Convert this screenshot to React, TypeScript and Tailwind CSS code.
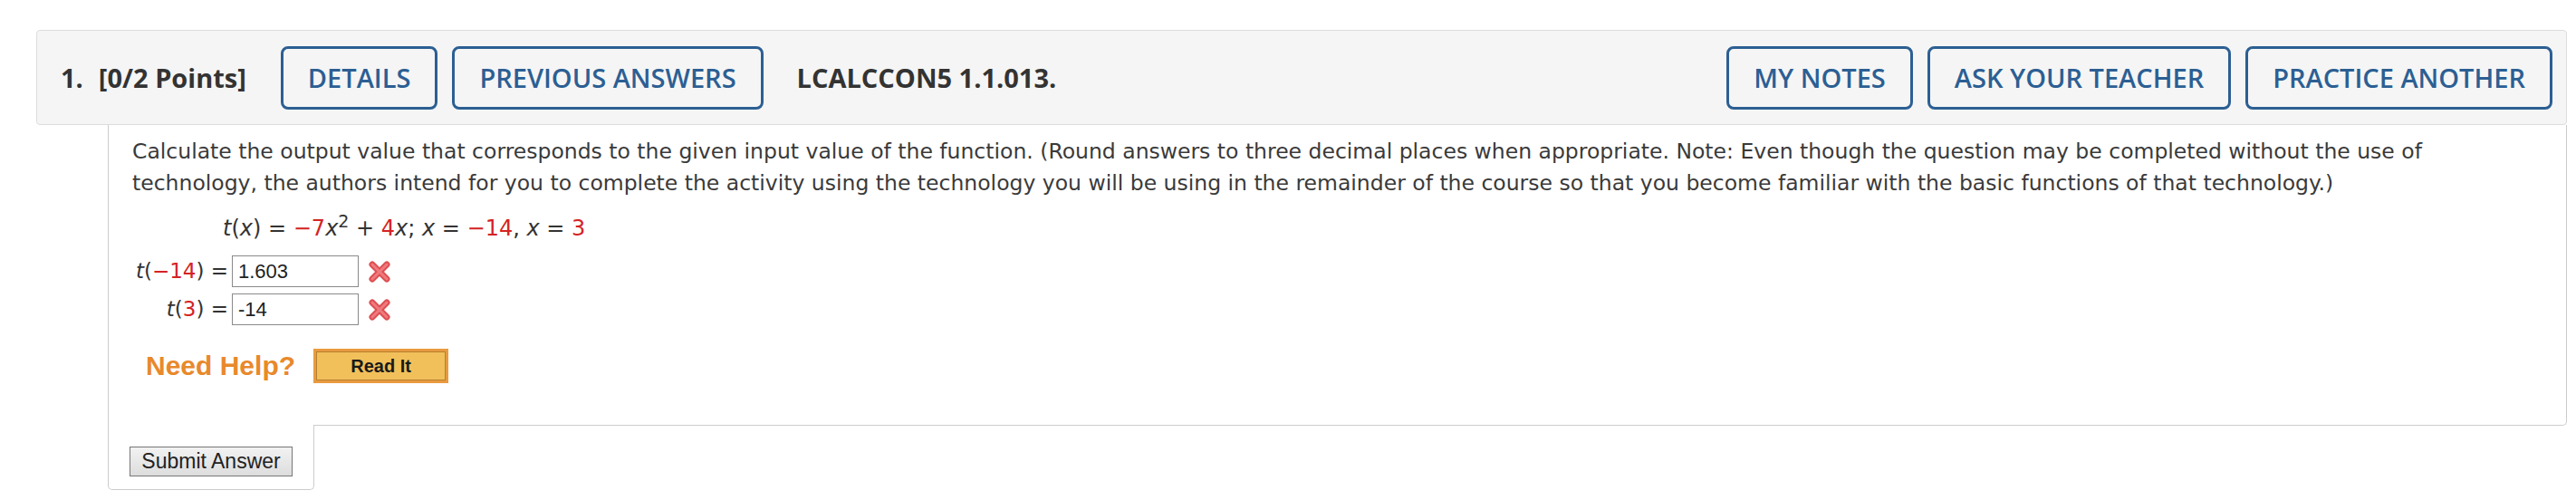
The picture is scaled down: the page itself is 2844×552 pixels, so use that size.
const headerBtn =
  "h-[70px] px-[27px] border-[3px] border-[#2c5f93] rounded-[8px] text-[#2c5f93] text-[29px] font-semibold flex items-center bg-[#f5f5f5]";

const red = "text-[#d42323]";

const XMark = () => (
  <svg width="28" height="26" viewBox="0 0 28 26" className="ml-[9px]">
    <path d="M6 5 L22 21 M22 5 L6 21" stroke="#dd4f53" strokeWidth="7" strokeLinecap="round" />
    <path d="M6 5 L22 21 M22 5 L6 21" stroke="#f07a7d" strokeWidth="3" strokeLinecap="round" />
  </svg>
);

const App = () => {
  return (
    <div className="w-[2844px] h-[552px] bg-white pt-[33px] pl-[40px] pr-[10px] font-['Open_Sans',sans-serif] text-[#333]">
      <div className="h-[105px] border border-[#dddddd] rounded-[4px] bg-[#f5f5f5] flex items-center pl-[26px] pr-[15px]">
        <span className="text-[29px] font-bold">1.</span>
        <span className="text-[29px] font-bold ml-[17px]">[0/2 Points]</span>
        <div className={headerBtn + " ml-[38px]"}>DETAILS</div>
        <div className={headerBtn + " ml-[16px]"}>PREVIOUS ANSWERS</div>
        <span className="text-[29px] font-bold ml-[37px]">LCALCCON5 1.1.013.</span>
        <div className="flex-1" />
        <div className={headerBtn}>MY NOTES</div>
        <div className={headerBtn + " ml-[16px]"}>ASK YOUR TEACHER</div>
        <div className={headerBtn + " ml-[16px]"}>PRACTICE ANOTHER</div>
      </div>

      <div className="ml-[79px]">
        <div className="border-x border-b border-[#cccccc] rounded-br-[5px] pl-[26px] pr-[100px] pt-[12px] pb-[43px]">
          <p className="font-['DejaVu_Sans',sans-serif] text-[23.5px] leading-[35px] text-[#3a3a3a]">
            Calculate the output value that corresponds to the given input value of the function. (Round answers to three
            decimal places when appropriate. Note: Even though the question may be completed without the use of technology,
            the authors intend for you to complete the activity using the technology you will be using in the remainder of
            the course so that you become familiar with the basic functions of that technology.)
          </p>
          <div className="ml-[100px] mt-[15px] font-['DejaVu_Sans',sans-serif] text-[24px] leading-[35px] text-[#333]">
            <i>t</i>(<i>x</i>) = <span className={red}>−7</span>
            <i>x</i>
            <sup className="text-[19px]">2</sup> + <span className={red}>4</span>
            <i>x</i>; <i>x</i> = <span className={red}>−14</span>, <i>x</i> = <span className={red}>3</span>
          </div>

          <div className="mt-[12px] flex flex-col gap-[7px] font-['DejaVu_Sans',sans-serif] text-[23px]">
            <div className="flex items-center">
              <div className="w-[110px] text-right pr-[4px] whitespace-nowrap">
                <i>t</i>(<span className={red}>−14</span>) =
              </div>
              <div className="w-[140px] h-[35px] border border-[#8a8a8a] bg-white flex items-center pl-[6px] font-['Liberation_Sans',sans-serif] text-[22px] text-[#222]">
                1.603
              </div>
              <XMark />
            </div>
            <div className="flex items-center">
              <div className="w-[110px] text-right pr-[4px] whitespace-nowrap">
                <i>t</i>(<span className={red}>3</span>) =
              </div>
              <div className="w-[140px] h-[35px] border border-[#8a8a8a] bg-white flex items-center pl-[6px] font-['Liberation_Sans',sans-serif] text-[22px] text-[#222]">
                -14
              </div>
              <XMark />
            </div>
          </div>

          <div className="mt-[22px] ml-[15px] flex items-center font-['Liberation_Sans',sans-serif]">
            <span className="text-[30px] font-bold text-[#e8892b]">Need Help?</span>
            <div className="ml-[20px] w-[149px] h-[38px] bg-[#e99a3f] p-[3px]">
              <div className="w-full h-full border border-[#b5802f] bg-[#f2c05b] flex items-center justify-center text-[20px] font-bold text-[#1a1a1a]">
                Read It
              </div>
            </div>
          </div>
        </div>

        <div className="relative -mt-px w-[228px] bg-white border-x border-b border-[#cccccc] rounded-b-[5px] pl-[23px] pt-[24px] pb-[14px]">
          <div className="w-[180px] h-[33px] border border-[#777777] bg-gradient-to-b from-[#f2f2f2] to-[#dddddd] flex items-center justify-center font-['Liberation_Sans',sans-serif] text-[23px] text-[#222]">
            Submit Answer
          </div>
        </div>
      </div>
    </div>
  );
};

export default App;
